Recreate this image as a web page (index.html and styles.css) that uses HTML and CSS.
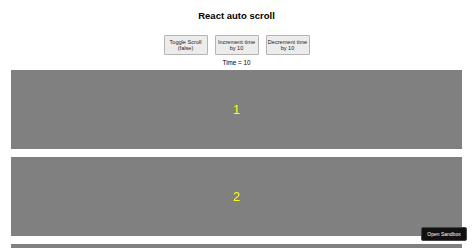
FILE: index.html
```html
<!DOCTYPE html>
<html>
<head>
<meta charset="utf-8">
<link rel="stylesheet" href="styles.css">
</head>
<body>
<div class="app">
  <h1 class="title">React auto scroll</h1>
  <div class="controls">
    <button class="btn">Toggle Scroll<br>(false)</button>
    <button class="btn">Increment time<br>by 10</button>
    <button class="btn">Decrement time<br>by 10</button>
  </div>
  <div class="time">Time = 10</div>
  <div class="list">
    <div class="item">1</div>
    <div class="item">2</div>
    <div class="item">3</div>
  </div>
</div>
<a class="sandbox">Open Sandbox</a>
</body>
</html>
```
FILE: styles.css
```css
html, body {
  margin: 0;
  padding: 0;
  background: #ffffff;
  overflow: hidden;
  height: 248px;
}
body {
  font-family: "Liberation Sans", Arial, sans-serif;
  color: #000;
}
.app {
  display: flex;
  flex-direction: column;
  align-items: center;
  padding: 11px 12px 0 11px;
}
.title {
  margin: 0;
  font-size: 9.5px;
  line-height: 9.5px;
  font-weight: bold;
}
.controls {
  display: flex;
  gap: 7px;
  margin-top: 14.5px;
}
.btn {
  width: 44px;
  height: 20px;
  padding: 0;
  margin: 0;
  font-family: "Liberation Sans", Arial, sans-serif;
  font-size: 5.6px;
  line-height: 6.4px;
  color: #222;
  background: #ececec;
  border: 1px solid #b4b4b4;
  border-radius: 1px;
}
.time {
  margin-top: 3.5px;
  font-size: 6.3px;
  line-height: 7px;
}
.list {
  align-self: stretch;
  display: flex;
  flex-direction: column;
  gap: 8px;
  margin-top: 4.5px;
}
.item {
  height: 79px;
  flex: none;
  background: #808080;
  color: #ffff00;
  font-size: 12.5px;
  display: flex;
  align-items: center;
  justify-content: center;
}
.sandbox {
  position: fixed;
  right: 7px;
  bottom: 7px;
  width: 46px;
  height: 14px;
  background: #111;
  color: #fff;
  font-size: 5px;
  border-radius: 2px;
  display: flex;
  align-items: center;
  justify-content: center;
  border: 0.5px solid #444;
  box-sizing: border-box;
}
```
